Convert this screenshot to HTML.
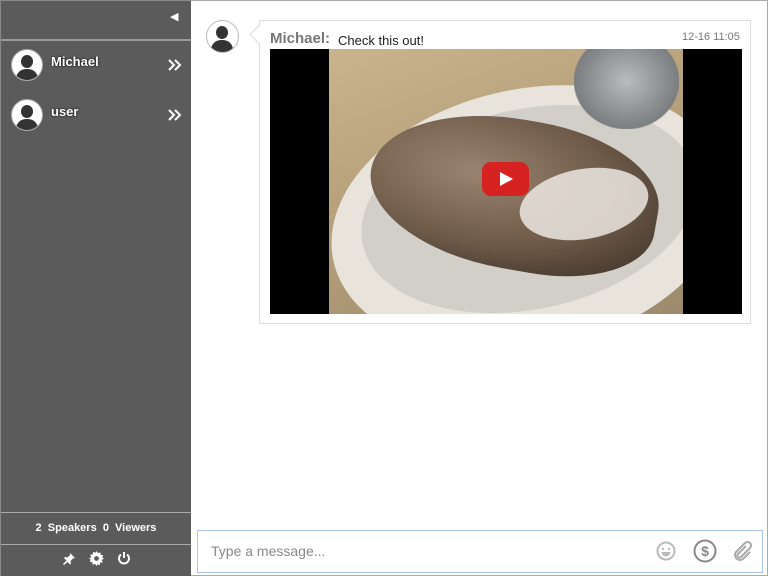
<!DOCTYPE html>
<html><head><style>
body{margin:0;width:768px;height:576px;position:relative;overflow:hidden;background:#fff;font-family:"Liberation Sans",sans-serif}
.sb{position:absolute;left:0;top:0;width:191px;height:576px;background:#5b5b5b;border-left:1px solid #888;border-top:1px solid #888;box-sizing:border-box}
.frame{position:absolute;left:191px;top:0;width:577px;height:576px;border:1px solid #aaa;border-left:none;box-sizing:border-box}
.av{position:absolute;width:30px;height:30px;border-radius:50%;background:#fff;border:1px solid #aaa;overflow:hidden}
.av .h{position:absolute;left:9px;top:5px;width:12px;height:13px;border-radius:50%;background:#333}
.av .b{position:absolute;left:4px;top:19px;width:22px;height:16px;border-radius:10px 10px 0 0;background:#333}
.nm{position:absolute;left:50px;color:#fff;font-weight:bold;font-size:13px;text-shadow:0 0 2px #000}
.ch{position:absolute;left:167px}
</style></head><body>
<div class="sb">
<div style="position:absolute;left:169px;top:9px;color:#fff;font-size:11px">◀</div>
<div style="position:absolute;left:0;top:38px;width:190px;height:2px;background:#999"></div>
<div class="av" style="left:10px;top:48px"><div class="h"></div><div class="b"></div></div>
<div class="nm" style="top:53px">Michael</div>
<svg class="ch" style="top:58px" width="14" height="12"><path d="M1 1l5 5-5 5M7 1l5 5-5 5" stroke="#fff" stroke-width="2" fill="none"/></svg>
<div class="av" style="left:10px;top:98px"><div class="h"></div><div class="b"></div></div>
<div class="nm" style="top:103px">user</div>
<svg class="ch" style="top:108px" width="14" height="12"><path d="M1 1l5 5-5 5M7 1l5 5-5 5" stroke="#fff" stroke-width="2" fill="none"/></svg>
<div style="position:absolute;left:0;top:511px;width:190px;height:1px;background:#aaa"></div>
<div style="position:absolute;left:0;top:521px;width:190px;text-align:center;color:#fff;font-size:11px;font-weight:bold">2&nbsp; Speakers&nbsp; 0&nbsp; Viewers</div>
<div style="position:absolute;left:0;top:543px;width:190px;height:1px;background:#aaa"></div>
<svg style="position:absolute;left:61px;top:551px" width="14" height="14" viewBox="0 0 14 14"><path d="M8 1l5 5-2 .5-2.5 2.5.5 2.5-1 1-2.5-2.5L2 13l-1-1 3.5-3.5L2 6l1-1 2.5.5L8 3z" fill="#fff"/></svg>
<svg style="position:absolute;left:88px;top:550px" width="15" height="15" viewBox="0 0 16 16"><path d="M8 0l1.5 2.3 2.6-.9.3 2.7 2.7.3-.9 2.6L16 8l-2.3 1.5.9 2.6-2.7.3-.3 2.7-2.6-.9L8 16l-1.5-2.3-2.6.9-.3-2.7-2.7-.3.9-2.6L0 8l2.3-1.5-.9-2.6 2.7-.3.3-2.7 2.6.9z" fill="#fff"/><circle cx="8" cy="8" r="2.5" fill="#5b5b5b"/></svg>
<svg style="position:absolute;left:116px;top:550px" width="14" height="14"><path d="M4 3.5A5 5 0 1 0 10 3.5" stroke="#fff" stroke-width="2" fill="none"/><path d="M7 1v6" stroke="#fff" stroke-width="2"/></svg>
</div>
<div class="frame"></div>
<div class="av" style="left:206px;top:20px;width:31px;height:31px;border-color:#bbb"><div class="h"></div><div class="b"></div></div>
<div style="position:absolute;left:259px;top:20px;width:492px;height:304px;border:1px solid #ddd;box-sizing:border-box"></div>
<div style="position:absolute;left:252px;top:28px;width:12px;height:12px;background:#fff;border-left:1px solid #ddd;border-bottom:1px solid #ddd;transform:rotate(45deg)"></div>
<div style="position:absolute;left:270px;top:30px;font-size:15px;font-weight:bold;color:#777">Michael:</div>
<div style="position:absolute;left:338px;top:33px;font-size:13px;color:#222">Check this out!</div>
<div style="position:absolute;left:682px;top:31px;font-size:11px;color:#777">12-16 11:05</div>
<div style="position:absolute;left:270px;top:49px;width:472px;height:265px;background:#000"></div>
<div style="position:absolute;left:329px;top:49px;width:354px;height:265px;background:linear-gradient(160deg,#c9b48f 0%,#b8a27c 40%,#9c8a6c 100%);overflow:hidden">
<div style="position:absolute;left:0;top:40px;width:400px;height:260px;border-radius:50%;background:#e8e4dc;transform:rotate(-12deg)"></div>
<div style="position:absolute;left:30px;top:60px;width:340px;height:200px;border-radius:50%;background:#d2cec8;transform:rotate(-12deg)"></div>
<div style="position:absolute;left:40px;top:70px;width:290px;height:150px;border-radius:50% 45% 40% 50%;background:radial-gradient(ellipse at 35% 40%,#9a8270,#6e5a48 55%,#4d3f33 80%);transform:rotate(10deg)"></div>
<div style="position:absolute;left:190px;top:120px;width:130px;height:70px;border-radius:50%;background:#ece8e2;opacity:.85;transform:rotate(-10deg)"></div>
<div style="position:absolute;left:245px;top:0;width:105px;height:80px;background:radial-gradient(ellipse at 50% 40%,#b8bcbe,#7a7e80 70%,transparent 72%)"></div>
</div>
<div style="position:absolute;left:482px;top:162px;width:47px;height:34px;border-radius:9px;background:#d62220"></div>
<div style="position:absolute;left:500px;top:172px;width:0;height:0;border-left:13px solid #fff;border-top:7px solid transparent;border-bottom:7px solid transparent"></div>
<div style="position:absolute;left:197px;top:530px;width:566px;height:43px;border:1px solid #a9c4ee;box-sizing:border-box"></div>
<div style="position:absolute;left:211px;top:543px;font-size:14px;color:#888">Type a message...</div>
<svg style="position:absolute;left:656px;top:541px" width="20" height="20"><circle cx="10" cy="10" r="8.5" stroke="#bbb" stroke-width="2" fill="none"/><circle cx="7" cy="8" r="1.2" fill="#bbb"/><circle cx="13" cy="8" r="1.2" fill="#bbb"/><path d="M5.5 11h9a4.5 4.5 0 0 1-9 0z" fill="#bbb"/></svg>
<svg style="position:absolute;left:693px;top:539px" width="24" height="24"><circle cx="12" cy="12" r="10.5" stroke="#888" stroke-width="2" fill="none"/><text x="12" y="17" text-anchor="middle" font-family="Liberation Sans" font-weight="bold" font-size="14" fill="#888">$</text></svg>
<svg style="position:absolute;left:731px;top:540px" width="22" height="22" viewBox="0 0 22 22"><path d="M15 6l-8 8a2 2 0 0 0 3 3l9-9a3.5 3.5 0 0 0-5-5l-9 9a5 5 0 0 0 7 7l7-7" stroke="#aaa" stroke-width="2" fill="none"/></svg>
</body></html>
